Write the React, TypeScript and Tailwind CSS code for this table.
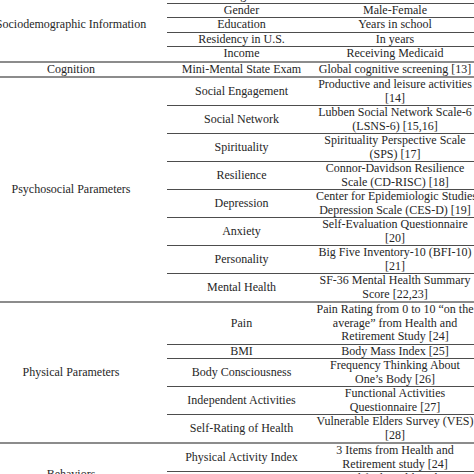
import React from 'react';

type Row = { name: string; measure: string[] };
type Group = { title: string; rows: Row[]; pad?: string };

const groups: Group[] = [
  {
    title: 'Sociodemographic Information',
    rows: [
      { name: 'Age', measure: ['Date of birth'] },
      { name: 'Gender', measure: ['Male-Female'] },
      { name: 'Education', measure: ['Years in school'] },
      { name: 'Residency in U.S.', measure: ['In years'] },
      { name: 'Income', measure: ['Receiving Medicaid'] },
    ],
  },
  {
    title: 'Cognition',
    rows: [{ name: 'Mini-Mental State Exam', measure: ['Global cognitive screening [13]'] }],
  },
  {
    title: 'Psychosocial Parameters',
    rows: [
      { name: 'Social Engagement', measure: ['Productive and leisure activities', '[14]'] },
      { name: 'Social Network', measure: ['Lubben Social Network Scale-6', '(LSNS-6) [15,16]'] },
      { name: 'Spirituality', measure: ['Spirituality Perspective Scale', '(SPS) [17]'] },
      { name: 'Resilience', measure: ['Connor-Davidson Resilience', 'Scale (CD-RISC) [18]'] },
      { name: 'Depression', measure: ['Center for Epidemiologic Studies', 'Depression Scale (CES-D) [19]'] },
      { name: 'Anxiety', measure: ['Self-Evaluation Questionnaire', '[20]'] },
      { name: 'Personality', measure: ['Big Five Inventory-10 (BFI-10)', '[21]'] },
      { name: 'Mental Health', measure: ['SF-36 Mental Health Summary', 'Score [22,23]'] },
    ],
  },
  {
    title: 'Physical Parameters',
    rows: [
      {
        name: 'Pain',
        measure: ['Pain Rating from 0 to 10 \u201Con the', 'average\u201D from Health and', 'Retirement Study [24]'],
      },
      { name: 'BMI', measure: ['Body Mass Index [25]'] },
      { name: 'Body Consciousness', measure: ['Frequency Thinking About', 'One\u2019s Body [26]'] },
      { name: 'Independent Activities', measure: ['Functional Activities', 'Questionnaire [27]'] },
      { name: 'Self-Rating of Health', measure: ['Vulnerable Elders Survey (VES)', '[28]'] },
    ],
  },
  {
    title: 'Behaviors',
    pad: 'pt-[6px]',
    rows: [
      { name: 'Physical Activity Index', measure: ['3 Items from Health and', 'Retirement study [24]'] },
      { name: 'Health Habits', measure: ['Modified Health Habits', 'Questionnaire [29]'] },
    ],
  },
];

export default function App() {
  return (
    <div
      className="h-[474px] w-[474px] overflow-hidden bg-white text-[#262626]"
      style={{ fontFamily: '"Liberation Serif", "DejaVu Serif", serif' }}
    >
      <table className="-ml-[25px] -mt-[11px] w-[499px] table-fixed border-collapse text-[12px] leading-[13.5px]">
        <colgroup>
          <col className="w-[192px]" />
          <col className="w-[149px]" />
          <col className="w-[158px]" />
        </colgroup>
        <tbody>
          {groups.map((g) =>
            g.rows.map((r, i) => {
              const last = i === g.rows.length - 1;
              const line = last ? 'border-b-2 border-[#8c8c8c]' : 'border-b border-[#4d4d4d]';
              return (
                <tr key={g.title + r.name}>
                  {i === 0 && (
                    <td
                      rowSpan={g.rows.length}
                      className={`border-b-2 border-[#8c8c8c] px-0 pb-0 ${g.pad ?? 'pt-0'} text-center align-middle whitespace-nowrap`}
                    >
                      {g.title}
                    </td>
                  )}
                  <td className={`${line} p-0 text-center align-middle whitespace-nowrap`}>{r.name}</td>
                  <td className={`${line} p-0 text-center align-middle`}>
                    {r.measure.map((m) => (
                      <div key={m} className="whitespace-nowrap">
                        {m}
                      </div>
                    ))}
                  </td>
                </tr>
              );
            }),
          )}
        </tbody>
      </table>
    </div>
  );
}
